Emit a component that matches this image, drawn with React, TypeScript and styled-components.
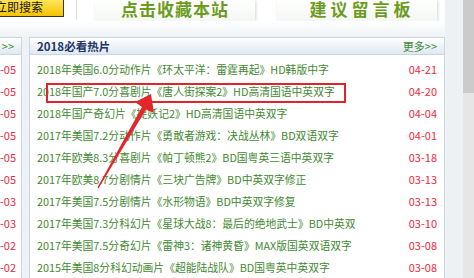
import styled, { createGlobalStyle } from 'styled-components';

const GlobalStyle = createGlobalStyle`
  html, body {
    margin: 0;
    padding: 0;
    background: #ffffff;
  }
  body {
    font-family: "Noto Sans CJK SC", "Liberation Sans", sans-serif;
  }
`;

const movies = [
  { title: '2018年美国6.0分动作片《环太平洋：雷霆再起》HD韩版中字', date: '04-21' },
  { title: '2018年国产7.0分喜剧片《唐人街探案2》HD高清国语中英双字', date: '04-20' },
  { title: '2018年国产奇幻片《捉妖记2》HD高清国语中英双字', date: '04-04' },
  { title: '2017年美国7.2分动作片《勇敢者游戏：决战丛林》BD双语双字', date: '04-01' },
  { title: '2017年欧美8.3分喜剧片《帕丁顿熊2》BD国粤英三语中英双字', date: '03-18' },
  { title: '2017年欧美8.7分剧情片《三块广告牌》BD中英双字修正', date: '03-13' },
  { title: '2017年美国7.5分剧情片《水形物语》BD中英双字修复', date: '03-13' },
  { title: '2017年美国7.3分科幻片《星球大战8：最后的绝地武士》BD中英双', date: '03-10' },
  { title: '2017年美国7.5分奇幻片《雷神3：诸神黄昏》MAX版国英双语双字', date: '03-08' },
  { title: '2015年美国8分科幻动画片《超能陆战队》BD国粤英中英双字', date: '03-08' },
];

const sideDates = ['-05', '-05', '-05', '-05', '-05', '-05', '-03', '-03', '-02', '-02'];

const Page = styled.div`
  position: relative;
  width: 474px;
  height: 278px;
  overflow: hidden;
  display: flex;
  background: #eef2f6;
`;

const Main = styled.div`
  flex: 1;
  display: flex;
  flex-direction: column;
`;

const TopBar = styled.div`
  height: 22px;
  display: flex;
  align-items: flex-start;
  background: #ffffff;
`;

const SearchButton = styled.div`
  margin-left: -12px;
  width: 76px;
  height: 17px;
  box-sizing: border-box;
  border: 1px solid #3a3a2a;
  border-top: none;
  background: linear-gradient(#ffe55a, #f5c400);
  color: #1a1a1a;
  font-size: 12px;
  line-height: 14px;
  padding-left: 6px;
  white-space: nowrap;
`;

const NavBox = styled.div`
  margin-left: 12px;
  height: 20px;
  border-left: 1px solid #dfe3e6;
  padding-left: 18px;
  display: flex;
  gap: 22px;
`;

const NavTab = styled.div<{ $spacing?: number; $indent?: number }>`
  width: 160px;
  height: 21px;
  box-sizing: border-box;
  padding-left: ${({ $indent }) => $indent ?? 0}px;
  background: linear-gradient(#ffffff, #f4f7f4);
  box-shadow: 1px 1px 3px rgba(0, 0, 0, 0.16);
  color: #6c9c1e;
  font-size: 17px;
  font-weight: bold;
  line-height: 18px;
  text-align: center;
  letter-spacing: ${({ $spacing }) => $spacing ?? 1}px;
  white-space: nowrap;
`;

const Gap = styled.div`
  height: 16px;
  background: linear-gradient(#ffffff, #eef2f6);
`;

const Columns = styled.div`
  flex: 1;
  display: flex;
  gap: 7px;
`;

const Panel = styled.div<{ $w: number; $shift?: number }>`
  width: ${({ $w }) => $w}px;
  margin-left: ${({ $shift }) => $shift ?? 0}px;
  box-sizing: border-box;
  border: 1px solid #c9d7e4;
  border-bottom: none;
  background: #ffffff;
  display: flex;
  flex-direction: column;
`;

const PanelHead = styled.div`
  height: 16px;
  background: linear-gradient(#ffffff, #dfe8f1);
  border-bottom: 1px solid #c9d7e4;
  display: flex;
  align-items: center;
  justify-content: space-between;
  padding: 0 7px;
`;

const HeadTitle = styled.span`
  color: #1d3568;
  font-size: 11.5px;
  font-weight: bold;
`;

const More = styled.span`
  color: #3d8a34;
  font-size: 11px;
`;

const List = styled.div<{ $side?: boolean }>`
  padding: ${({ $side }) => ($side ? '3px 5px 0 0' : '3px 7px 0 7px')};
`;

const Row = styled.div`
  height: 22px;
  display: flex;
  align-items: center;
  justify-content: space-between;
  font-size: 10.8px;
  white-space: nowrap;
`;

const Title = styled.span`
  color: #3f8a31;
`;

const DateText = styled.span`
  color: #ea2a41;
  font-size: 11px;
`;

const SideDate = styled.div`
  height: 22px;
  display: flex;
  align-items: center;
  justify-content: flex-end;
  color: #ea2a41;
  font-size: 11px;
`;

const Gutter = styled.div`
  width: 18px;
  background: #eef1f4;
`;

const Scrollbar = styled.div`
  width: 11px;
  display: flex;
  flex-direction: column;
  background: #e6e6e6;
`;

const Thumb = styled.div`
  height: 93px;
  background: #cbcbcb;
`;

const Highlight = styled.div`
  position: absolute;
  left: 46px;
  top: 83px;
  width: 300px;
  height: 20px;
  box-sizing: border-box;
  border: 2px solid #e0242a;
`;

const ArrowSvg = styled.svg`
  position: absolute;
  left: 0;
  top: 0;
  pointer-events: none;
`;

export default function App() {
  return (
    <>
      <GlobalStyle />
      <Page>
        <Main>
          <TopBar>
            <SearchButton>立即搜索</SearchButton>
            <NavBox>
              <NavTab>点击收藏本站</NavTab>
              <NavTab $spacing={4} $indent={10}>建议留言板</NavTab>
            </NavBox>
          </TopBar>
          <Gap />
          <Columns>
            <Panel $w={60} $shift={-38}>
              <PanelHead>
                <span />
                <More>&gt;&gt;</More>
              </PanelHead>
              <List $side>
                {sideDates.map((d, i) => (
                  <SideDate key={i}>{d}</SideDate>
                ))}
              </List>
            </Panel>
            <Panel $w={416}>
              <PanelHead>
                <HeadTitle>2018必看热片</HeadTitle>
                <More>更多&gt;&gt;</More>
              </PanelHead>
              <List>
                {movies.map((m, i) => (
                  <Row key={i}>
                    <Title>{m.title}</Title>
                    <DateText>{m.date}</DateText>
                  </Row>
                ))}
              </List>
            </Panel>
          </Columns>
        </Main>
        <Gutter />
        <Scrollbar>
          <Thumb />
        </Scrollbar>
        <Highlight />
        <ArrowSvg width="474" height="278" viewBox="0 0 474 278">
          <polygon
            points="151,94 154,113 146,109.5 98.6,188.2 97.4,187.6 142,107 135,102"
            fill="#e3262c"
          />
        </ArrowSvg>
      </Page>
    </>
  );
}
